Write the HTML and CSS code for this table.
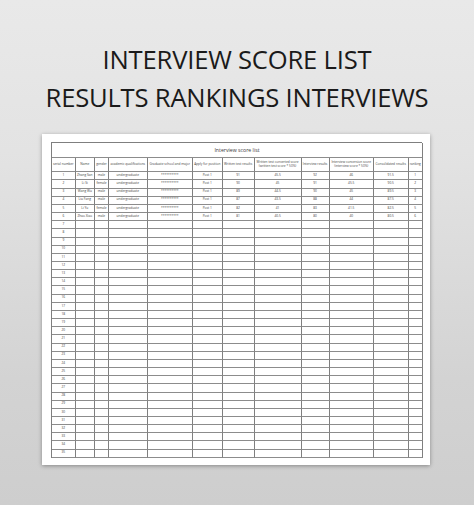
FILE: index.html
```html
<!DOCTYPE html>
<html>
<head>
<meta charset="utf-8">
<link rel="stylesheet" href="styles.css">
</head>
<body>
<div class="page">
  <h1 class="heading">INTERVIEW SCORE LIST<br>RESULTS RANKINGS INTERVIEWS</h1>
  <div class="paper">
    <div class="sheet" id="sheet">
      <div class="cell title">Interview score list</div>
      <div class="cell head">serial number</div><div class="cell head">Name</div><div class="cell head">gender</div><div class="cell head">academic qualifications</div><div class="cell head">Graduate school and major</div><div class="cell head">Apply for position</div><div class="cell head">Written test results</div><div class="cell head">Written test converted score (written test score * 50%)</div><div class="cell head">Interview results</div><div class="cell head">Interview conversion score (interview score * 50%)</div><div class="cell head">Consolidated results</div><div class="cell head">ranking</div>
      <div class="cell">1</div><div class="cell">Zhang San</div><div class="cell">male</div><div class="cell">undergraduate</div><div class="cell">**********</div><div class="cell">Post 1</div><div class="cell">91</div><div class="cell">45.5</div><div class="cell">92</div><div class="cell">46</div><div class="cell">91.5</div><div class="cell">1</div>
      <div class="cell">2</div><div class="cell">Li Si</div><div class="cell">female</div><div class="cell">undergraduate</div><div class="cell">**********</div><div class="cell">Post 1</div><div class="cell">90</div><div class="cell">45</div><div class="cell">91</div><div class="cell">45.5</div><div class="cell">90.5</div><div class="cell">2</div>
      <div class="cell">3</div><div class="cell">Wang Wu</div><div class="cell">male</div><div class="cell">undergraduate</div><div class="cell">**********</div><div class="cell">Post 1</div><div class="cell">89</div><div class="cell">44.5</div><div class="cell">90</div><div class="cell">45</div><div class="cell">89.5</div><div class="cell">3</div>
      <div class="cell">4</div><div class="cell">Liu Fang</div><div class="cell">male</div><div class="cell">undergraduate</div><div class="cell">**********</div><div class="cell">Post 1</div><div class="cell">87</div><div class="cell">43.5</div><div class="cell">88</div><div class="cell">44</div><div class="cell">87.5</div><div class="cell">4</div>
      <div class="cell">5</div><div class="cell">Li Yu</div><div class="cell">female</div><div class="cell">undergraduate</div><div class="cell">**********</div><div class="cell">Post 1</div><div class="cell">82</div><div class="cell">41</div><div class="cell">83</div><div class="cell">41.5</div><div class="cell">82.5</div><div class="cell">5</div>
      <div class="cell">6</div><div class="cell">Zhao Xiao</div><div class="cell">male</div><div class="cell">undergraduate</div><div class="cell">**********</div><div class="cell">Post 1</div><div class="cell">81</div><div class="cell">40.5</div><div class="cell">80</div><div class="cell">40</div><div class="cell">80.5</div><div class="cell">6</div>
    </div>
  </div>
</div>
<script src="script.js"></script>
</body>
</html>
```

FILE: script.js
```js
(function () {
  var sheet = document.getElementById('sheet');
  for (var r = 7; r <= 35; r++) {
    for (var c = 0; c < 12; c++) {
      var d = document.createElement('div');
      d.className = 'cell';
      if (c === 0) d.textContent = String(r);
      sheet.appendChild(d);
    }
  }
})();
```

FILE: styles.css
```css
html, body {
  margin: 0;
  padding: 0;
}
body {
  width: 474px;
  height: 505px;
  overflow: hidden;
  background: linear-gradient(to bottom, #e9e9e9 0%, #e3e3e3 30%, #d3d3d3 75%, #cecece 100%);
  font-family: "Open Sans", "Noto Sans", sans-serif;
}
.page {
  padding-top: 41px;
}
.heading {
  margin: 0;
  font-family: "Open Sans", sans-serif;
  font-weight: 400;
  font-size: 25.6px;
  line-height: 37.7px;
  text-align: center;
  color: #1a1a1a;
  letter-spacing: -0.2px;
}
.paper {
  box-sizing: border-box;
  margin: 17.4px 0 0 42px;
  width: 388px;
  height: 331px;
  background: #ffffff;
  padding: 8px 8px 7px 9px;
  box-shadow: 0 1px 4px rgba(0, 0, 0, 0.35);
}
.sheet {
  display: grid;
  width: 371px;
  box-sizing: border-box;
  grid-template-columns: 23.6px 19.4px 14px 38.6px 45.4px 29.6px 32px 47px 28px 44.4px 34.6px 14.4px;
  grid-template-rows: 15px 14.5px repeat(35, 8.17px);
  border-left: 0.8px solid #7f7f7f;
  border-top: 0.8px solid #7f7f7f;
  font-family: "Open Sans", sans-serif;
  color: #444;
}
.cell {
  box-sizing: border-box;
  border-right: 0.8px solid #7f7f7f;
  border-bottom: 0.8px solid #8c8c8c;
  display: flex;
  align-items: center;
  justify-content: center;
  text-align: center;
  font-size: 3.2px;
  line-height: 3.7px;
  overflow: hidden;
  white-space: nowrap;
  min-width: 0;
  min-height: 0;
}
.cell.title {
  grid-column: 1 / -1;
  font-size: 5.2px;
  line-height: 6px;
  color: #3a3a3a;
}
.cell.head {
  white-space: normal;
  padding: 0 0.4px;
}
```
